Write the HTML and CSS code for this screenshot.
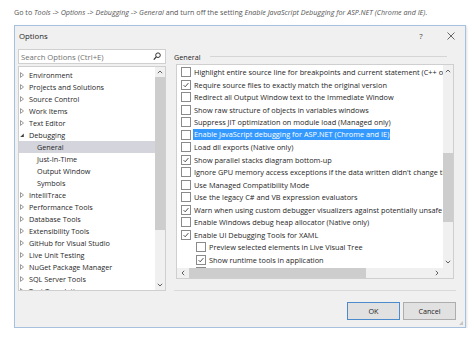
FILE: index.html
```html
<!DOCTYPE html>
<html lang="en">
<head>
  <meta charset="UTF-8" />
  <title>Options</title>
  <link rel="stylesheet" href="styles.css">
</head>
<body>
  <p class="intro">Go to <em>Tools</em> -&gt; <em>Options</em> -&gt; <em>Debugging</em> -&gt; <em>General</em> and turn off the setting <em>Enable JavaScript Debugging for ASP.NET (Chrome and IE)</em>.</p>

  <div class="dialog">
    <div class="titlebar">
      <span class="title">Options</span>
      <span class="help">?</span>
      <span class="close">
        <svg width="8" height="8" viewBox="0 0 8 8"><path d="M0.5 0.5L7.5 7.5M7.5 0.5L0.5 7.5" stroke="#444" stroke-width="0.8" fill="none"/></svg>
      </span>
    </div>

    <div class="dialog-body">
      <!-- left: search + tree -->
      <div class="nav">
        <div class="search">
          <span class="search-text">Search Options (Ctrl+E)</span>
          <svg width="8" height="9" viewBox="0 0 8 9"><circle cx="5" cy="3.2" r="2.3" stroke="#333" stroke-width="1" fill="none"/><path d="M3.3 4.9L0.8 7.6" stroke="#333" stroke-width="1.3"/></svg>
        </div>
        <div class="tree">
          <ul class="tree-list">
            <li class="tree-item"><svg class="arrow" viewBox="0 0 4 6"><path d="M0.5 0.6V5.4L3.5 3Z"/></svg>Environment</li>
            <li class="tree-item"><svg class="arrow" viewBox="0 0 4 6"><path d="M0.5 0.6V5.4L3.5 3Z"/></svg>Projects and Solutions</li>
            <li class="tree-item"><svg class="arrow" viewBox="0 0 4 6"><path d="M0.5 0.6V5.4L3.5 3Z"/></svg>Source Control</li>
            <li class="tree-item"><svg class="arrow" viewBox="0 0 4 6"><path d="M0.5 0.6V5.4L3.5 3Z"/></svg>Work Items</li>
            <li class="tree-item"><svg class="arrow" viewBox="0 0 4 6"><path d="M0.5 0.6V5.4L3.5 3Z"/></svg>Text Editor</li>
            <li class="tree-item"><svg class="arrow open" viewBox="0 0 4 6"><path d="M3.8 1.4V5H0.2Z"/></svg>Debugging</li>
            <li class="tree-item child selected">General</li>
            <li class="tree-item child">Just-In-Time</li>
            <li class="tree-item child">Output Window</li>
            <li class="tree-item child">Symbols</li>
            <li class="tree-item"><svg class="arrow" viewBox="0 0 4 6"><path d="M0.5 0.6V5.4L3.5 3Z"/></svg>IntelliTrace</li>
            <li class="tree-item"><svg class="arrow" viewBox="0 0 4 6"><path d="M0.5 0.6V5.4L3.5 3Z"/></svg>Performance Tools</li>
            <li class="tree-item"><svg class="arrow" viewBox="0 0 4 6"><path d="M0.5 0.6V5.4L3.5 3Z"/></svg>Database Tools</li>
            <li class="tree-item"><svg class="arrow" viewBox="0 0 4 6"><path d="M0.5 0.6V5.4L3.5 3Z"/></svg>Extensibility Tools</li>
            <li class="tree-item"><svg class="arrow" viewBox="0 0 4 6"><path d="M0.5 0.6V5.4L3.5 3Z"/></svg>GitHub for Visual Studio</li>
            <li class="tree-item"><svg class="arrow" viewBox="0 0 4 6"><path d="M0.5 0.6V5.4L3.5 3Z"/></svg>Live Unit Testing</li>
            <li class="tree-item"><svg class="arrow" viewBox="0 0 4 6"><path d="M0.5 0.6V5.4L3.5 3Z"/></svg>NuGet Package Manager</li>
            <li class="tree-item"><svg class="arrow" viewBox="0 0 4 6"><path d="M0.5 0.6V5.4L3.5 3Z"/></svg>SQL Server Tools</li>
            <li class="tree-item"><svg class="arrow" viewBox="0 0 4 6"><path d="M0.5 0.6V5.4L3.5 3Z"/></svg>Text Templating</li>
          </ul>
          <div class="vscroll tree-scroll">
            <span class="sb-btn"><svg width="6" height="4" viewBox="0 0 6 4"><path d="M0.8 3.2L3 1L5.2 3.2" stroke="#606060" stroke-width="1" fill="none"/></svg></span>
            <span class="thumb"></span>
            <span class="track"></span>
            <span class="sb-btn"><svg width="6" height="4" viewBox="0 0 6 4"><path d="M0.8 0.8L3 3L5.2 0.8" stroke="#606060" stroke-width="1" fill="none"/></svg></span>
          </div>
        </div>
      </div>

      <!-- right: General page -->
      <div class="page">
        <div class="group-head">
          <span>General</span>
          <span class="group-line"></span>
        </div>

        <div class="listbox">
          <div class="items">
            <div class="row"><span class="box"></span>Highlight entire source line for breakpoints and current statement (C++ only)</div>
            <div class="row"><span class="box checked"><svg viewBox="0 0 10 10"><path d="M2 5.2L4 7.2L8 2.6"/></svg></span>Require source files to exactly match the original version</div>
            <div class="row"><span class="box"></span>Redirect all Output Window text to the Immediate Window</div>
            <div class="row"><span class="box"></span>Show raw structure of objects in variables windows</div>
            <div class="row"><span class="box"></span>Suppress JIT optimization on module load (Managed only)</div>
            <div class="row"><span class="box"></span><span class="hl">Enable JavaScript debugging for ASP.NET (Chrome and IE)</span></div>
            <div class="row"><span class="box"></span>Load dll exports (Native only)</div>
            <div class="row"><span class="box checked"><svg viewBox="0 0 10 10"><path d="M2 5.2L4 7.2L8 2.6"/></svg></span>Show parallel stacks diagram bottom-up</div>
            <div class="row"><span class="box"></span>Ignore GPU memory access exceptions if the data written didn't change the value</div>
            <div class="row"><span class="box"></span>Use Managed Compatibility Mode</div>
            <div class="row"><span class="box"></span>Use the legacy C# and VB expression evaluators</div>
            <div class="row"><span class="box checked"><svg viewBox="0 0 10 10"><path d="M2 5.2L4 7.2L8 2.6"/></svg></span>Warn when using custom debugger visualizers against potentially unsafe processes (Managed only)</div>
            <div class="row"><span class="box"></span>Enable Windows debug heap allocator (Native only)</div>
            <div class="row"><span class="box checked"><svg viewBox="0 0 10 10"><path d="M2 5.2L4 7.2L8 2.6"/></svg></span>Enable UI Debugging Tools for XAML</div>
            <div class="row sub"><span class="box"></span>Preview selected elements in Live Visual Tree</div>
            <div class="row sub"><span class="box checked"><svg viewBox="0 0 10 10"><path d="M2 5.2L4 7.2L8 2.6"/></svg></span>Show runtime tools in application</div>
            <div class="row sub"><span class="box"></span>Enable Edit and Continue</div>
          </div>
          <div class="vscroll list-scroll">
            <span class="sb-btn"><svg width="6" height="4" viewBox="0 0 6 4"><path d="M0.8 3.2L3 1L5.2 3.2" stroke="#606060" stroke-width="1" fill="none"/></svg></span>
            <span class="track top"></span>
            <span class="thumb"></span>
            <span class="track"></span>
            <span class="sb-btn"><svg width="6" height="4" viewBox="0 0 6 4"><path d="M0.8 0.8L3 3L5.2 0.8" stroke="#606060" stroke-width="1" fill="none"/></svg></span>
          </div>
          <div class="hscroll">
            <span class="sb-btn"><svg width="4" height="6" viewBox="0 0 4 6"><path d="M3.2 0.8L1 3L3.2 5.2" stroke="#606060" stroke-width="1" fill="none"/></svg></span>
            <span class="thumb"></span>
            <span class="track"></span>
            <span class="sb-btn"><svg width="4" height="6" viewBox="0 0 4 6"><path d="M0.8 0.8L3 3L0.8 5.2" stroke="#606060" stroke-width="1" fill="none"/></svg></span>
          </div>
          <div class="corner"></div>
        </div>

        <div class="separator"></div>

        <div class="buttons">
          <button class="btn default">OK</button>
          <button class="btn">Cancel</button>
        </div>
      </div>
    </div>

    <svg class="grip" width="6" height="6" viewBox="0 0 6 6"><path d="M5 1V5H1Z" fill="#c4c4c4"/></svg>
  </div>
</body>
</html>
```

FILE: styles.css
```css
body {
  margin: 0;
  background: #fff;
  font-family: 'Open Sans', 'Noto Sans', sans-serif;
  color: #262626;
}
.intro {
  margin: 0;
  height: 25px;
  padding-left: 14px;
  font-size: 7.15px;
  line-height: 24px;
  color: #555;
  white-space: nowrap;
}
.dialog {
  position: relative;
  margin-left: 14px;
  width: 452px;
  height: 303px;
  box-sizing: border-box;
  border: 1px solid #a6c1dd;
  background: #f0f0f0;
  display: flex;
  flex-direction: column;
  box-shadow: 1px 1px 2px rgba(0, 0, 0, 0.12);
}
.titlebar {
  height: 20px;
  display: flex;
  align-items: center;
  padding-left: 4px;
  font-size: 7.8px;
}
.title {
  flex: 1;
}
.help,
.close {
  width: 30px;
  display: flex;
  justify-content: center;
  color: #444;
}
.close {
  width: 29px;
}
.dialog-body {
  flex: 1;
  display: flex;
  gap: 8px;
  padding: 3px 9px 0 3px;
}

/* left column */
.nav {
  width: 148px;
  display: flex;
  flex-direction: column;
  gap: 2px;
}
.search {
  height: 15px;
  box-sizing: border-box;
  border: 1px solid #d0d0d0;
  background: #fff;
  display: flex;
  align-items: center;
  padding: 0 4px 0 2px;
  font-size: 7.7px;
  color: #717171;
}
.search-text {
  flex: 1;
}
.tree {
  height: 225px;
  box-sizing: border-box;
  border: 1px solid #cfcfcf;
  background: #fff;
  display: flex;
}
.tree-list {
  flex: 1;
  margin: 0;
  padding: 2px 0 0;
  list-style: none;
  overflow: hidden;
}
.tree-item {
  height: 12px;
  display: flex;
  align-items: center;
  font-size: 7.25px;
  white-space: nowrap;
}
.tree-item .arrow {
  width: 4px;
  height: 6px;
  margin: 0 5px 0 1px;
  fill: none;
  stroke: #707070;
  stroke-width: 0.7;
}
.tree-item .arrow.open {
  fill: #404040;
  stroke: none;
}
.tree-item.child {
  padding-left: 18px;
}
.tree-item.selected {
  background: #d3d4dc;
}

/* scrollbars */
.vscroll {
  width: 10px;
  display: flex;
  flex-direction: column;
  background: #f0f0f0;
}
.vscroll .sb-btn {
  height: 10px;
  display: flex;
  align-items: center;
  justify-content: center;
}
.vscroll .thumb {
  background: #cdcdcd;
}
.vscroll .track {
  flex: 1;
}
.tree-scroll .thumb {
  height: 153px;
}
.list-scroll .sb-btn {
  height: 12px;
}
.list-scroll .track.top {
  flex: none;
  height: 76px;
}
.list-scroll .thumb {
  height: 69px;
}
.hscroll {
  display: flex;
  background: #f0f0f0;
}
.hscroll .sb-btn {
  width: 12px;
  display: flex;
  align-items: center;
  justify-content: center;
}
.hscroll .thumb {
  width: 177px;
  background: #cdcdcd;
}
.hscroll .track {
  flex: 1;
}
.corner {
  background: #f0f0f0;
}

/* right column */
.page {
  flex: 1;
  display: flex;
  flex-direction: column;
}
.group-head {
  height: 15px;
  display: flex;
  align-items: center;
  font-size: 7.2px;
}
.group-line {
  flex: 1;
  height: 1px;
  margin: 0 9px 0 10px;
  background: #d5d5d5;
}
.listbox {
  height: 215px;
  margin: 0 2px;
  box-sizing: border-box;
  border: 1px solid #cfcfcf;
  background: #fff;
  display: grid;
  grid-template-columns: 1fr 10px;
  grid-template-rows: 1fr 10px;
}
.items {
  overflow: hidden;
  padding: 1px 0 0 4px;
}
.row {
  height: 12.5px;
  display: flex;
  align-items: center;
  gap: 3px;
  white-space: nowrap;
  font-size: 7.35px;
}
.row.sub {
  padding-left: 15px;
}
.box {
  flex: none;
  width: 10px;
  height: 10px;
  box-sizing: border-box;
  border: 1px solid #8a8a8a;
  background: #fff;
}
.box svg {
  display: block;
  width: 8px;
  height: 8px;
  fill: none;
  stroke: #222;
  stroke-width: 1;
}
.hl {
  margin-left: -1px;
  padding: 0 1px;
  line-height: 11px;
  background: #3399ff;
  color: #fff;
}
.separator {
  height: 1px;
  margin-top: 11px;
  background: #d9d9d9;
}
.buttons {
  display: flex;
  justify-content: flex-end;
  gap: 3px;
  margin-top: 11px;
}
.btn {
  width: 53px;
  height: 18px;
  box-sizing: border-box;
  padding: 0;
  border: 1px solid #adadad;
  background: #e1e1e1;
  font-family: inherit;
  font-size: 7.2px;
  color: #262626;
}
.btn.default {
  border-color: #4b8bcb;
}
.grip {
  position: absolute;
  right: 1px;
  bottom: 1px;
}
```
